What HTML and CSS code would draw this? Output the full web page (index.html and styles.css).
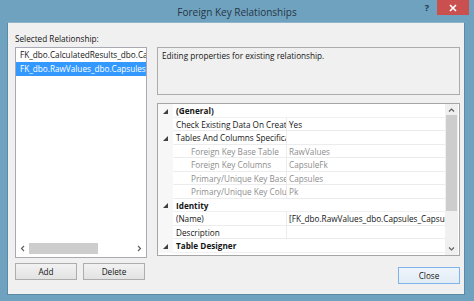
FILE: index.html
```html
<!DOCTYPE html>
<html>
<head>
<meta charset="utf-8">
<link rel="stylesheet" href="styles.css">
</head>
<body>
<div class="window">
  <div class="titlebar">
    <div></div>
    <div class="title">Foreign Key Relationships</div>
    <div class="controls">
      <span class="help">?</span>
      <span class="close-x">
        <svg width="8" height="8" viewBox="0 0 8 8"><path d="M1 1L7 7M7 1L1 7" stroke="#fff" stroke-width="1.6"/></svg>
      </span>
    </div>
  </div>
  <div class="client">
    <div class="label">Selected Relationship:</div>
    <div class="main">
      <div class="leftcol">
        <div class="listbox">
          <div class="items">
            <div class="item">FK_dbo.CalculatedResults_dbo.Capsules_CapsuleFk</div>
            <div class="item selected">FK_dbo.RawValues_dbo.Capsules_CapsuleFk</div>
          </div>
          <div class="hscroll">
            <svg class="arr" width="6" height="7" viewBox="0 0 6 7"><path d="M4 1L1.5 3.5L4 6" fill="none" stroke="#606060" stroke-width="1.2"/></svg>
            <div class="htrack"><div class="hthumb"></div></div>
            <svg class="arr" width="6" height="7" viewBox="0 0 6 7"><path d="M2 1L4.5 3.5L2 6" fill="none" stroke="#606060" stroke-width="1.2"/></svg>
          </div>
        </div>
        <div class="btnrow">
          <div class="btn">Add</div>
          <div class="btn">Delete</div>
        </div>
      </div>
      <div class="rightcol">
        <div class="desc">Editing properties for existing relationship.</div>
        <div class="grid">
          <div class="rows">
            <div class="row cat"><span class="tri"><svg width="5" height="5" viewBox="0 0 5 5"><path d="M5 0L5 5L0 5Z" fill="#404040"/></svg></span><span class="name">(General)</span></div>
            <div class="row prop"><span class="gut"></span><span class="name">Check Existing Data On Creation Or Re-Enabling</span><span class="val">Yes</span></div>
            <div class="row prop"><span class="tri"><svg width="5" height="5" viewBox="0 0 5 5"><path d="M5 0L5 5L0 5Z" fill="#404040"/></svg></span><span class="name">Tables And Columns Specification</span><span class="val"></span></div>
            <div class="row prop ro"><span class="gut"></span><span class="name ind">Foreign Key Base Table</span><span class="val">RawValues</span></div>
            <div class="row prop ro"><span class="gut"></span><span class="name ind">Foreign Key Columns</span><span class="val">CapsuleFk</span></div>
            <div class="row prop ro"><span class="gut"></span><span class="name ind">Primary/Unique Key Base Table</span><span class="val">Capsules</span></div>
            <div class="row prop ro"><span class="gut"></span><span class="name ind">Primary/Unique Key Columns</span><span class="val">Pk</span></div>
            <div class="row cat"><span class="tri"><svg width="5" height="5" viewBox="0 0 5 5"><path d="M5 0L5 5L0 5Z" fill="#404040"/></svg></span><span class="name">Identity</span></div>
            <div class="row prop"><span class="gut"></span><span class="name">(Name)</span><span class="val">[FK_dbo.RawValues_dbo.Capsules_CapsuleFk]</span></div>
            <div class="row prop"><span class="gut"></span><span class="name">Description</span><span class="val"></span></div>
            <div class="row cat"><span class="tri"><svg width="5" height="5" viewBox="0 0 5 5"><path d="M5 0L5 5L0 5Z" fill="#404040"/></svg></span><span class="name">Table Designer</span></div>
          </div>
          <div class="vscroll">
            <svg class="varr" width="7" height="6" viewBox="0 0 7 6"><path d="M1 4.5L3.5 2L6 4.5" fill="none" stroke="#606060" stroke-width="1.2"/></svg>
            <div class="vtrack"><div class="vthumb"></div></div>
            <svg class="varr" width="7" height="6" viewBox="0 0 7 6"><path d="M1 1.5L3.5 4L6 1.5" fill="none" stroke="#606060" stroke-width="1.2"/></svg>
          </div>
        </div>
        <div class="closerow">
          <div class="btn default">Close</div>
        </div>
      </div>
    </div>
  </div>
</div>
</body>
</html>
```

FILE: styles.css
```css
* { box-sizing: border-box; }
html, body { margin: 0; padding: 0; }
body {
  width: 474px;
  height: 301px;
  overflow: hidden;
  font-family: "Segoe UI", "Open Sans", "Noto Sans", sans-serif;
  font-size: 8.2px;
  color: #151515;
}
.window {
  width: 474px;
  height: 301px;
  background: #6fa2be;
  display: flex;
  flex-direction: column;
}
.titlebar {
  height: 22px;
  display: grid;
  grid-template-columns: 1fr auto 1fr;
  align-items: start;
}
.title {
  font-size: 10px;
  color: #263547;
  line-height: 22px;
  padding-top: 1px;
}
.controls {
  justify-self: end;
  display: flex;
  align-items: start;
  margin-right: 5px;
}
.help {
  font-size: 9px;
  font-weight: bold;
  color: #1e3550;
  margin-top: 3px;
  margin-right: 8px;
  line-height: 10px;
}
.close-x {
  width: 32px;
  height: 15px;
  background: #c9504e;
  display: flex;
  align-items: center;
  justify-content: center;
}
.client {
  flex: 1;
  margin: 0 9px 6px 7px;
  background: #f0f0f0;
  border: 1px solid #5c8aa4;
  border-top-color: #8fb5ca;
  padding: 8px 4px 0 7px;
  display: flex;
  flex-direction: column;
}
.label {
  height: 16px;
  line-height: 16px;
}
.main {
  display: flex;
  gap: 10px;
}
.leftcol {
  width: 132px;
  display: flex;
  flex-direction: column;
}
.listbox {
  height: 211px;
  background: #fff;
  border: 1px solid #a9a9b4;
  display: flex;
  flex-direction: column;
  overflow: hidden;
}
.items { flex: 1; }
.item {
  height: 14px;
  line-height: 14px;
  padding-left: 4px;
  white-space: nowrap;
  overflow: hidden;
}
.item.selected {
  background: #3399ff;
  color: #fff;
}
.hscroll {
  height: 13px;
  margin-bottom: 2px;
  display: flex;
  align-items: center;
  gap: 3px;
  padding: 0 4px 0 4px;
}
.htrack {
  flex: 1;
  height: 11px;
}
.hthumb {
  width: 69px;
  height: 11px;
  background: #cdcdcd;
}
.btnrow {
  margin-top: 5px;
  display: flex;
  gap: 6px;
}
.btn {
  width: 62px;
  height: 17px;
  border: 1px solid #adadad;
  background: linear-gradient(#f2f2f2, #e3e3e3);
  text-align: center;
  line-height: 15px;
}
.btn.default {
  border-color: #7eb4ea;
  background: linear-gradient(#eef4fa, #e2ecf6);
}
.rightcol {
  width: 303px;
  display: flex;
  flex-direction: column;
}
.desc {
  height: 48px;
  border: 1px solid #acacac;
  background: #f0f0f0;
  padding: 2px 4px;
  line-height: 12px;
}
.grid {
  margin-top: 8px;
  height: 153px;
  border: 1px solid #a6a6a6;
  background: #fff;
  display: flex;
  overflow: hidden;
}
.rows {
  flex: 1;
  min-width: 0;
  background: #fff;
}
.row {
  height: 13.5px;
  display: flex;
  align-items: center;
  white-space: nowrap;
  overflow: hidden;
}
.tri, .gut {
  width: 15px;
  flex: none;
  height: 100%;
  background: #f7f7f7;
  display: flex;
  align-items: center;
  justify-content: center;
}
.tri svg { margin-left: 0; margin-top: 1px; }
.cat .name {
  font-weight: bold;
  padding-left: 3px;
  flex: 1;
  height: 100%;
  line-height: 13.5px;
  border-bottom: 1px solid #f0f0f0;
}
.prop .name {
  width: 114px;
  flex: none;
  padding-left: 3px;
  overflow: hidden;
  height: 100%;
  line-height: 13.5px;
  border-bottom: 1px solid #ececec;
  border-right: 1px solid #ececec;
}
.prop .name.ind { padding-left: 18px; }
.prop .val {
  flex: 1;
  min-width: 0;
  padding-left: 2px;
  overflow: hidden;
  height: 100%;
  line-height: 13.5px;
  border-bottom: 1px solid #ececec;
}
.ro .name, .ro .val { color: #8d8d8d; }
.vscroll {
  width: 13px;
  flex: none;
  background: #f0f0f0;
  display: flex;
  flex-direction: column;
  align-items: center;
  padding: 3px 0 3px;
  margin-right: 1px;
}
.varr { flex: none; }
.vtrack {
  flex: 1;
  width: 100%;
  padding: 2px 1px;
}
.vthumb {
  height: 96px;
  background: #cdcdcd;
}
.closerow {
  margin-top: 11px;
  display: flex;
  justify-content: flex-end;
}
```
